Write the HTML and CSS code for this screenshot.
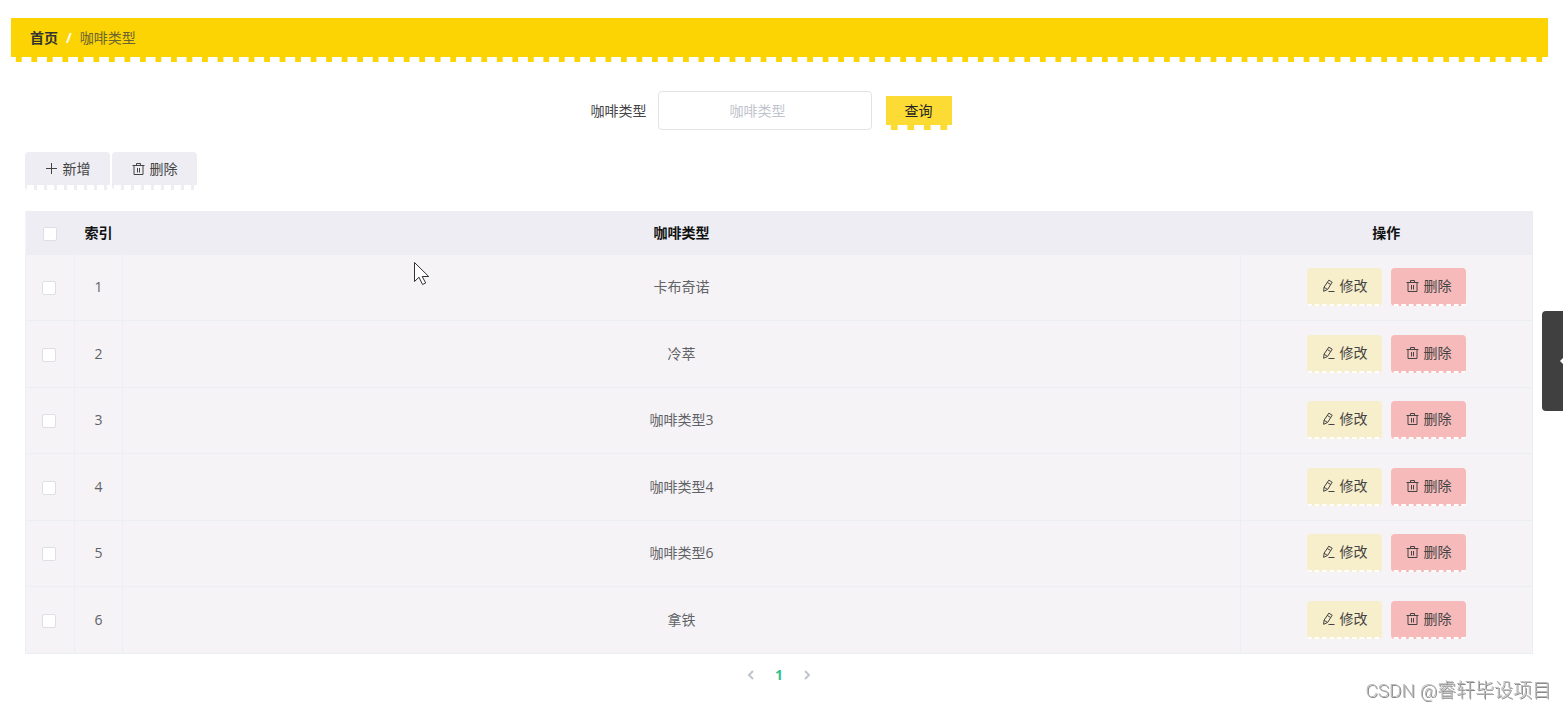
FILE: index.html
```
<!DOCTYPE html>
<html lang="zh-CN">
<head>
    <meta charset="UTF-8">
    <meta name="viewport" content="width=device-width, initial-scale=1.0">
    <title>咖啡类型</title>
    <link rel="stylesheet" href="styles.css">
</head>
<body>
    <!-- shared icons -->
    <svg class="sprite" aria-hidden="true">
        <symbol id="icon-plus" viewBox="0 0 14 14">
            <path d="M6.500 1v11M1 6.500h11"/>
        </symbol>
        <symbol id="icon-trash" viewBox="0 0 14 14">
            <path d="M.5 3.500h12M4.500 3.500v-2h4v2M2 3.500v9h9v-9M5.500 6v4.500M7.500 6v4.500"/>
        </symbol>
        <symbol id="icon-edit" viewBox="0 0 14 14">
            <path d="M6.800 1.200l3.400 2-4.600 7.300-4 1.800.5-4.200zM5.300 3.500l3.400 2M2.100 8.300l3.300 2M6.500 12.500h6"/>
        </symbol>
    </svg>

    <div class="container">
        <nav class="breadcrumb">
            <a href="#">首页</a>
            <span class="separator">/</span>
            <span class="current">咖啡类型</span>
        </nav>

        <main class="content">
            <form class="search">
                <label for="type">咖啡类型</label>
                <input type="text" id="type" placeholder="咖啡类型">
                <button type="button" class="btn-search">查询</button>
            </form>

            <div class="actions">
                <button class="btn"><svg class="icon"><use href="#icon-plus"/></svg>新增</button>
                <button class="btn"><svg class="icon"><use href="#icon-trash"/></svg>删除</button>
            </div>

            <table class="table">
                <thead>
                    <tr>
                        <th class="col-check"><input type="checkbox" aria-label="全选"></th>
                        <th class="col-index">索引</th>
                        <th>咖啡类型</th>
                        <th class="col-ops">操作</th>
                    </tr>
                </thead>
                <tbody>
                    <tr>
                        <td class="cell-check"><input type="checkbox" aria-label="1"></td>
                        <td>1</td>
                        <td>卡布奇诺</td>
                        <td>
                            <div class="ops">
                                <button class="btn btn-edit"><svg class="icon"><use href="#icon-edit"/></svg>修改</button>
                                <button class="btn btn-delete"><svg class="icon"><use href="#icon-trash"/></svg>删除</button>
                            </div>
                        </td>
                    </tr>
                    <tr>
                        <td class="cell-check"><input type="checkbox" aria-label="2"></td>
                        <td>2</td>
                        <td>冷萃</td>
                        <td>
                            <div class="ops">
                                <button class="btn btn-edit"><svg class="icon"><use href="#icon-edit"/></svg>修改</button>
                                <button class="btn btn-delete"><svg class="icon"><use href="#icon-trash"/></svg>删除</button>
                            </div>
                        </td>
                    </tr>
                    <tr>
                        <td class="cell-check"><input type="checkbox" aria-label="3"></td>
                        <td>3</td>
                        <td>咖啡类型3</td>
                        <td>
                            <div class="ops">
                                <button class="btn btn-edit"><svg class="icon"><use href="#icon-edit"/></svg>修改</button>
                                <button class="btn btn-delete"><svg class="icon"><use href="#icon-trash"/></svg>删除</button>
                            </div>
                        </td>
                    </tr>
                    <tr>
                        <td class="cell-check"><input type="checkbox" aria-label="4"></td>
                        <td>4</td>
                        <td>咖啡类型4</td>
                        <td>
                            <div class="ops">
                                <button class="btn btn-edit"><svg class="icon"><use href="#icon-edit"/></svg>修改</button>
                                <button class="btn btn-delete"><svg class="icon"><use href="#icon-trash"/></svg>删除</button>
                            </div>
                        </td>
                    </tr>
                    <tr>
                        <td class="cell-check"><input type="checkbox" aria-label="5"></td>
                        <td>5</td>
                        <td>咖啡类型6</td>
                        <td>
                            <div class="ops">
                                <button class="btn btn-edit"><svg class="icon"><use href="#icon-edit"/></svg>修改</button>
                                <button class="btn btn-delete"><svg class="icon"><use href="#icon-trash"/></svg>删除</button>
                            </div>
                        </td>
                    </tr>
                    <tr>
                        <td class="cell-check"><input type="checkbox" aria-label="6"></td>
                        <td>6</td>
                        <td>拿铁</td>
                        <td>
                            <div class="ops">
                                <button class="btn btn-edit"><svg class="icon"><use href="#icon-edit"/></svg>修改</button>
                                <button class="btn btn-delete"><svg class="icon"><use href="#icon-trash"/></svg>删除</button>
                            </div>
                        </td>
                    </tr>
                </tbody>
            </table>

            <div class="pager">
                <button aria-label="上一页"><svg viewBox="0 0 10 10"><path d="M7 1L3 5l4 4"/></svg></button>
                <button class="active">1</button>
                <button aria-label="下一页"><svg viewBox="0 0 10 10"><path d="M3 1l4 4-4 4"/></svg></button>
            </div>
        </main>
    </div>

    <button class="drawer" aria-label="展开"></button>

    <svg class="cursor" viewBox="0 0 16 24" aria-hidden="true">
        <path d="M.5 1v19l4.5-4.300 3.500 7.300 3.200-1.500-3.500-6.500h6.500z"/>
    </svg>

    <div class="watermark">CSDN @睿轩毕设项目</div>
</body>
</html>
```
FILE: styles.css
```
* {
    margin: 0;
    padding: 0;
    box-sizing: border-box;
}

body {
    font-family: "Open Sans", "Noto Sans CJK SC", sans-serif;
    font-size: 14px;
    line-height: 20px;
    color: #606266;
    background: #fff;
}

button,
input {
    font: inherit;
    border: none;
}

button {
    cursor: pointer;
}

.sprite {
    display: none;
}

.container {
    padding: 18px 15px 0 11px;
}

/* breadcrumb bar with a toothed lower edge */
.breadcrumb {
    display: flex;
    align-items: center;
    gap: 8px;
    height: 44px;
    padding: 0 19px 5px;
    background:
        linear-gradient(#fcd404, #fcd404) top / 100% 39px no-repeat,
        linear-gradient(90deg, transparent 34%, #fcd404 34% 66%, transparent 66%) bottom left / calc(100% / 99) 5px repeat-x;
}

.breadcrumb a {
    color: #333;
    font-weight: bold;
    text-decoration: none;
}

.breadcrumb .separator {
    color: #fff;
    font-weight: bold;
}

.breadcrumb .current {
    color: #6b6330;
}

.content {
    padding: 29px 15px 0 14px;
}

.search {
    display: flex;
    justify-content: center;
    align-items: center;
    padding-right: 16px;
}

.search label {
    margin-right: 11px;
    color: #444;
}

.search input {
    width: 214px;
    height: 39px;
    margin-right: 14px;
    padding: 0 24px 0 10px;
    border: 1px solid #e2e3e6;
    border-radius: 4px;
    text-align: center;
    outline: none;
}

.search input::placeholder {
    color: #c0c4cc;
}

.btn-search {
    width: 66px;
    height: 34px;
    margin-top: 4px;
    padding-bottom: 4px;
    color: #222;
    background:
        linear-gradient(#fcdc34, #fcdc34) top / 100% 29px no-repeat,
        linear-gradient(90deg, transparent 32%, #fcdc34 32% 68%, transparent 68%) bottom left / 25% 5px repeat-x;
}

.actions {
    display: flex;
    gap: 2px;
    margin-top: 22px;
}

.btn {
    display: flex;
    justify-content: center;
    align-items: center;
    gap: 4px;
    width: 85px;
    height: 38px;
    padding-bottom: 4px;
    border-radius: 4px;
    color: #444;
    background:
        linear-gradient(90deg, transparent 25%, #fff 25% 90%, transparent 90%) bottom left / 10px 5px repeat-x,
        #ededf3;
}

.icon {
    width: 14px;
    height: 14px;
    fill: none;
    stroke: currentColor;
    stroke-width: 1;
}

.table {
    width: 100%;
    margin-top: 21px;
    table-layout: fixed;
    border-collapse: collapse;
    text-align: center;
    background: #f5f3f6;
    border-right: 1px solid #ebebf3;
}

.table th {
    height: 43px;
    padding-top: 1px;
    color: #111;
    background: #ededf3;
}

.table td {
    height: 66px;
    border: 1px solid #ebeef2;
}

.table tr:nth-child(even) td {
    height: 67px;
}

.col-check {
    width: 49px;
}

.col-index {
    width: 48px;
}

.col-ops {
    width: 292px;
}

.table input {
    display: block;
    width: 14px;
    height: 14px;
    margin: 2px auto 0;
    appearance: none;
    background: #fff;
    border: 1px solid #dcdfe6;
    border-radius: 2px;
}

.table .cell-check {
    padding-right: 2px;
}

.ops {
    display: flex;
    justify-content: center;
    gap: 9px;
}

.ops .btn {
    width: 75px;
    padding-bottom: 2px;
}

.ops .btn-edit {
    background:
        linear-gradient(90deg, #fff 65%, transparent 65%) bottom left / 10% 2px repeat-x,
        #f7eecb;
}

.ops .btn-delete {
    background:
        linear-gradient(90deg, transparent 35%, #fff 35%) bottom left / 10% 2px repeat-x,
        #f7baba;
}

.pager {
    display: flex;
    justify-content: center;
    margin-top: 11px;
}

.pager button {
    display: flex;
    justify-content: center;
    align-items: center;
    width: 28px;
    height: 20px;
    color: #c0c4cc;
    background: none;
}

.pager svg {
    width: 10px;
    height: 10px;
    fill: none;
    stroke: currentColor;
    stroke-width: 2;
}

.pager .active {
    color: #35bf8f;
    font-weight: bold;
}

/* collapsed side panel handle */
.drawer {
    position: fixed;
    top: 311px;
    right: 0;
    width: 21px;
    height: 100px;
    border-radius: 4px 0 0 4px;
    background: #404040;
}

.drawer::after {
    content: "";
    position: absolute;
    top: 47px;
    right: 0;
    border: 3px solid transparent;
    border-left: none;
    border-right-color: #fff;
}

.cursor {
    position: absolute;
    top: 261px;
    left: 414px;
    width: 16px;
    height: 25px;
    fill: #fff;
    stroke: #333;
}

.watermark {
    position: fixed;
    right: 12px;
    bottom: 3px;
    font-family: Roboto, "Noto Sans CJK SC", sans-serif;
    font-size: 19px;
    font-weight: 300;
    line-height: 30px;
    color: #bbb;
    text-shadow: 1px 1px 0 #888;
}
```
